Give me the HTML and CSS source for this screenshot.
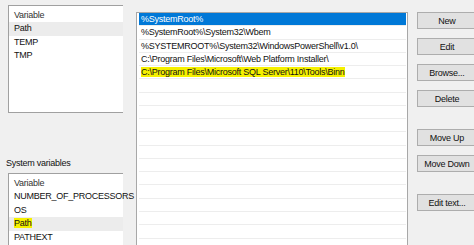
FILE: index.html
```html
<!DOCTYPE html>
<html lang="en">
<head>
    <meta charset="UTF-8">
    <title>Environment Variables</title>
    <link rel="stylesheet" href="styles.css">
</head>
<body>
    <div class="left-pane">
        <div class="var-list user-list">
            <div class="var-head">Variable</div>
            <div class="var-row soft">Path</div>
            <div class="var-row">TEMP</div>
            <div class="var-row">TMP</div>
        </div>
        <div class="group-label">System variables</div>
        <div class="var-list sys-list">
            <div class="var-head">Variable</div>
            <div class="var-row">NUMBER_OF_PROCESSORS</div>
            <div class="var-row">OS</div>
            <div class="var-row soft"><span class="mark">Path</span></div>
            <div class="var-row">PATHEXT</div>
        </div>
    </div>
    <div class="divider"></div>
    <div class="edit-pane">
        <div class="path-list">
            <div class="path-row selected">%SystemRoot%</div>
            <div class="path-row">%SystemRoot%\System32\Wbem</div>
            <div class="path-row">%SYSTEMROOT%\System32\WindowsPowerShell\v1.0\</div>
            <div class="path-row">C:\Program Files\Microsoft\Web Platform Installer\</div>
            <div class="path-row"><span class="mark">C:\Program Files\Microsoft SQL Server\110\Tools\Binn</span></div>
            <div class="path-row"></div>
            <div class="path-row"></div>
            <div class="path-row"></div>
            <div class="path-row"></div>
            <div class="path-row"></div>
            <div class="path-row"></div>
            <div class="path-row"></div>
            <div class="path-row"></div>
            <div class="path-row"></div>
            <div class="path-row"></div>
            <div class="path-row"></div>
            <div class="path-row"></div>
        </div>
        <div class="buttons">
            <button class="btn">New</button>
            <button class="btn">Edit</button>
            <button class="btn">Browse...</button>
            <button class="btn">Delete</button>
            <button class="btn gap">Move Up</button>
            <button class="btn">Move Down</button>
            <button class="btn gap">Edit text...</button>
        </div>
    </div>
</body>
</html>
```

FILE: styles.css
```css
body {
    margin: 0;
    width: 474px;
    height: 245px;
    overflow: hidden;
    display: flex;
    background: #f0f0f0;
    font-family: "Liberation Sans", Arial, sans-serif;
    font-size: 9px;
    letter-spacing: -0.25px;
    color: #111;
}
.left-pane {
    width: 124px;
    display: flex;
    flex-direction: column;
}
.var-list {
    margin-left: 8px;
    width: 115px;
    background: #fff;
    border: 1px solid #a0a0a0;
    border-right: none;
    box-sizing: border-box;
}
.user-list {
    margin-top: 5px;
    height: 108px;
    padding-top: 3px;
}
.sys-list {
    flex: 1;
    border-bottom: none;
    padding-top: 3px;
}
.var-head,
.var-row {
    height: 13.4px;
    line-height: 13.4px;
    padding-left: 5px;
    white-space: nowrap;
}
.var-head {
    color: #333;
}
.var-row.soft {
    background: #ececec;
}
.group-label {
    margin: 44px 0 3px 6px;
    height: 13px;
    line-height: 13px;
}
.divider {
    width: 2px;
    background: #9cc3ea;
}
.edit-pane {
    flex: 1;
    display: flex;
    padding-top: 12px;
}
.path-list {
    margin-left: 13px;
    width: 272px;
    background: #fff;
    border: 1px solid #a8a8a8;
    border-bottom: none;
    box-sizing: border-box;
    padding: 0 1px 0 2px;
}
.path-row {
    height: 13.27px;
    line-height: 11.27px;
    padding-top: 1px;
    box-sizing: border-box;
    border-bottom: 1px solid #ededed;
    padding-left: 2px;
    white-space: nowrap;
}
.path-row.selected {
    background: #0078d7;
    color: #fff;
}
.mark {
    background: #f5f000;
}
.buttons {
    margin-left: 9px;
    display: flex;
    flex-direction: column;
    gap: 9px;
    width: 60px;
    flex-shrink: 0;
}
.btn {
    height: 17px;
    padding: 0;
    margin: 0;
    font: inherit;
    letter-spacing: inherit;
    color: #111;
    background: #e1e1e1;
    border: 1px solid #adadad;
    white-space: nowrap;
    overflow: hidden;
}
.btn.gap {
    margin-top: 13px;
}
```
